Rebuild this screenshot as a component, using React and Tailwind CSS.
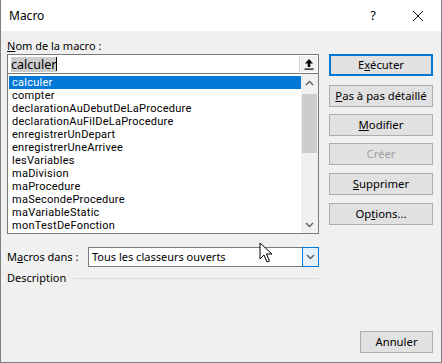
import React from "react";

const macros = [
  "calculer",
  "compter",
  "declarationAuDebutDeLaProcedure",
  "declarationAuFilDeLaProcedure",
  "enregistrerUnDepart",
  "enregistrerUneArrivee",
  "lesVariables",
  "maDivision",
  "maProcedure",
  "maSecondeProcedure",
  "maVariableStatic",
  "monTestDeFonction",
];

const Btn = ({ children, className = "", primary, disabled }) => (
  <div
    className={
      "flex h-[22px] w-[104px] items-center justify-center bg-[#e1e1e1] text-[11.3px] " +
      (primary ? "border-2 border-[#0078d7] " : "border border-[#adadad] ") +
      (disabled ? "text-[#a0a0a0] " : "text-black ") +
      className
    }
  >
    {children}
  </div>
);

const Chevron = ({ up }) => (
  <svg width="9" height="6" viewBox="0 0 9 6">
    <path
      d={up ? "M1 5 L4.5 1.5 L8 5" : "M1 1 L4.5 4.5 L8 1"}
      fill="none"
      stroke="#606060"
      strokeWidth="1.4"
    />
  </svg>
);

export default function App() {
  return (
    <div
      className="relative flex h-[363px] w-[442px] flex-col border border-t-0 border-[#7f7f7f] bg-[#f0f0f0] text-[11px] text-black"
      style={{ fontFamily: '"Noto Sans", "Open Sans", sans-serif' }}
    >
      {/* title bar */}
      <div className="flex h-[31px] items-center bg-white pl-[8px] text-[12px]">
        <span className="flex-1">Macro</span>
        <span className="mr-[36px] text-[13px]">?</span>
        <svg width="12" height="12" viewBox="0 0 12 12" className="mr-[17px]">
          <path d="M1 1 L11 11 M11 1 L1 11" stroke="#111" strokeWidth="1" />
        </svg>
      </div>

      <div className="flex flex-1 pl-[6px] pr-[8px] pb-[9px]">
        {/* left column */}
        <div className="flex w-[312px] flex-col">
          <div className="mt-[6px] h-[17px] leading-[17px]">
            <span className="underline">N</span>om de la macro :
          </div>
          <div className="flex h-[20px] items-center border border-[#7a7a7a] bg-white pl-[3px] text-[12.5px]">
            <span className="bg-[#cccccc] leading-[15px]">calculer</span>
            <span className="h-[14px] w-px bg-black" />
            <div className="ml-auto mr-[1px] flex h-[16px] w-[18px] items-center justify-center border-l border-[#dadada] bg-[#f0f0f0]">
              <svg width="10" height="12" viewBox="0 0 10 12">
                <path d="M5 1 L9 5.5 L6.3 5.5 L6.3 9 L3.7 9 L3.7 5.5 L1 5.5 Z" fill="#000" />
                <rect x="0.5" y="10.5" width="9" height="1.2" fill="#000" />
              </svg>
            </div>
          </div>
          <div
            className="flex h-[160px] border border-t-0 border-[#7a7a7a] bg-white text-[11px] tracking-[0.25px]"
            style={{ fontFamily: "Roboto, sans-serif" }}
          >
            <div className="flex-1 pl-[1px] pt-[2px]">
              {macros.map((m, i) => (
                <div
                  key={m}
                  className={
                    "h-[13px] pl-[3px] leading-[13px] " +
                    (i === 0 ? "bg-[#0078d7] text-white" : "")
                  }
                >
                  {m}
                </div>
              ))}
            </div>
            <div className="flex w-[17px] flex-col items-center bg-[#f0f0f0]">
              <div className="flex h-[17px] items-center">
                <Chevron up />
              </div>
              <div className="mt-[3px] h-[59px] w-[15px] bg-[#cdcdcd]" />
              <div className="mt-auto flex h-[17px] items-center">
                <Chevron />
              </div>
            </div>
          </div>

          <div className="mt-[13px] flex h-[20px] items-center">
            <span className="w-[81px]">
              M<span className="underline">a</span>cros dans :
            </span>
            <div className="flex h-[20px] flex-1 items-center border border-[#7a7a7a] bg-white pl-[3px]">
              <span className="flex-1">Tous les classeurs ouverts</span>
              <div className="flex h-[20px] w-[17px] items-center justify-center border border-[#0078d7] bg-[#e5f1fb] -mr-px">
                <Chevron />
              </div>
            </div>
          </div>

          <div className="mt-[3px] flex h-[17px] items-center">
            <span>Description</span>
            <div className="ml-[7px] h-px flex-1 bg-[#dcdcdc]" />
          </div>
        </div>

        {/* right column */}
        <div className="ml-[10px] flex flex-1 flex-col items-end">
          <div className="flex flex-col pt-[23px]">
            <Btn primary>
              <span>
                E<span className="underline">x</span>écuter
              </span>
            </Btn>
            <Btn className="mt-[9px]">
              <span>
                <span className="underline">P</span>as à pas détaillé
              </span>
            </Btn>
            <Btn className="mt-[7px]">
              <span>
                <span className="underline">M</span>odifier
              </span>
            </Btn>
            <Btn className="mt-[7px]" disabled>
              Créer
            </Btn>
            <Btn className="mt-[8px]">
              <span>
                <span className="underline">S</span>upprimer
              </span>
            </Btn>
            <Btn className="mt-[8px]">
              <span>
                Op<span className="underline">t</span>ions...
              </span>
            </Btn>
          </div>
          <div className="mt-auto flex h-[22px] w-[73px] items-center justify-center border border-[#adadad] bg-[#e1e1e1] text-[11.3px]">
            Annuler
          </div>
        </div>
      </div>

      {/* mouse cursor */}
      <svg
        width="14"
        height="22"
        viewBox="0 0 14 22"
        className="absolute left-[258px] top-[242px]"
      >
        <path
          d="M1 1 L1 17 L5 13 L8 20 L10.5 19 L7.5 12 L13 12 Z"
          fill="#fff"
          stroke="#000"
          strokeWidth="1"
          strokeLinejoin="round"
        />
      </svg>
    </div>
  );
}
